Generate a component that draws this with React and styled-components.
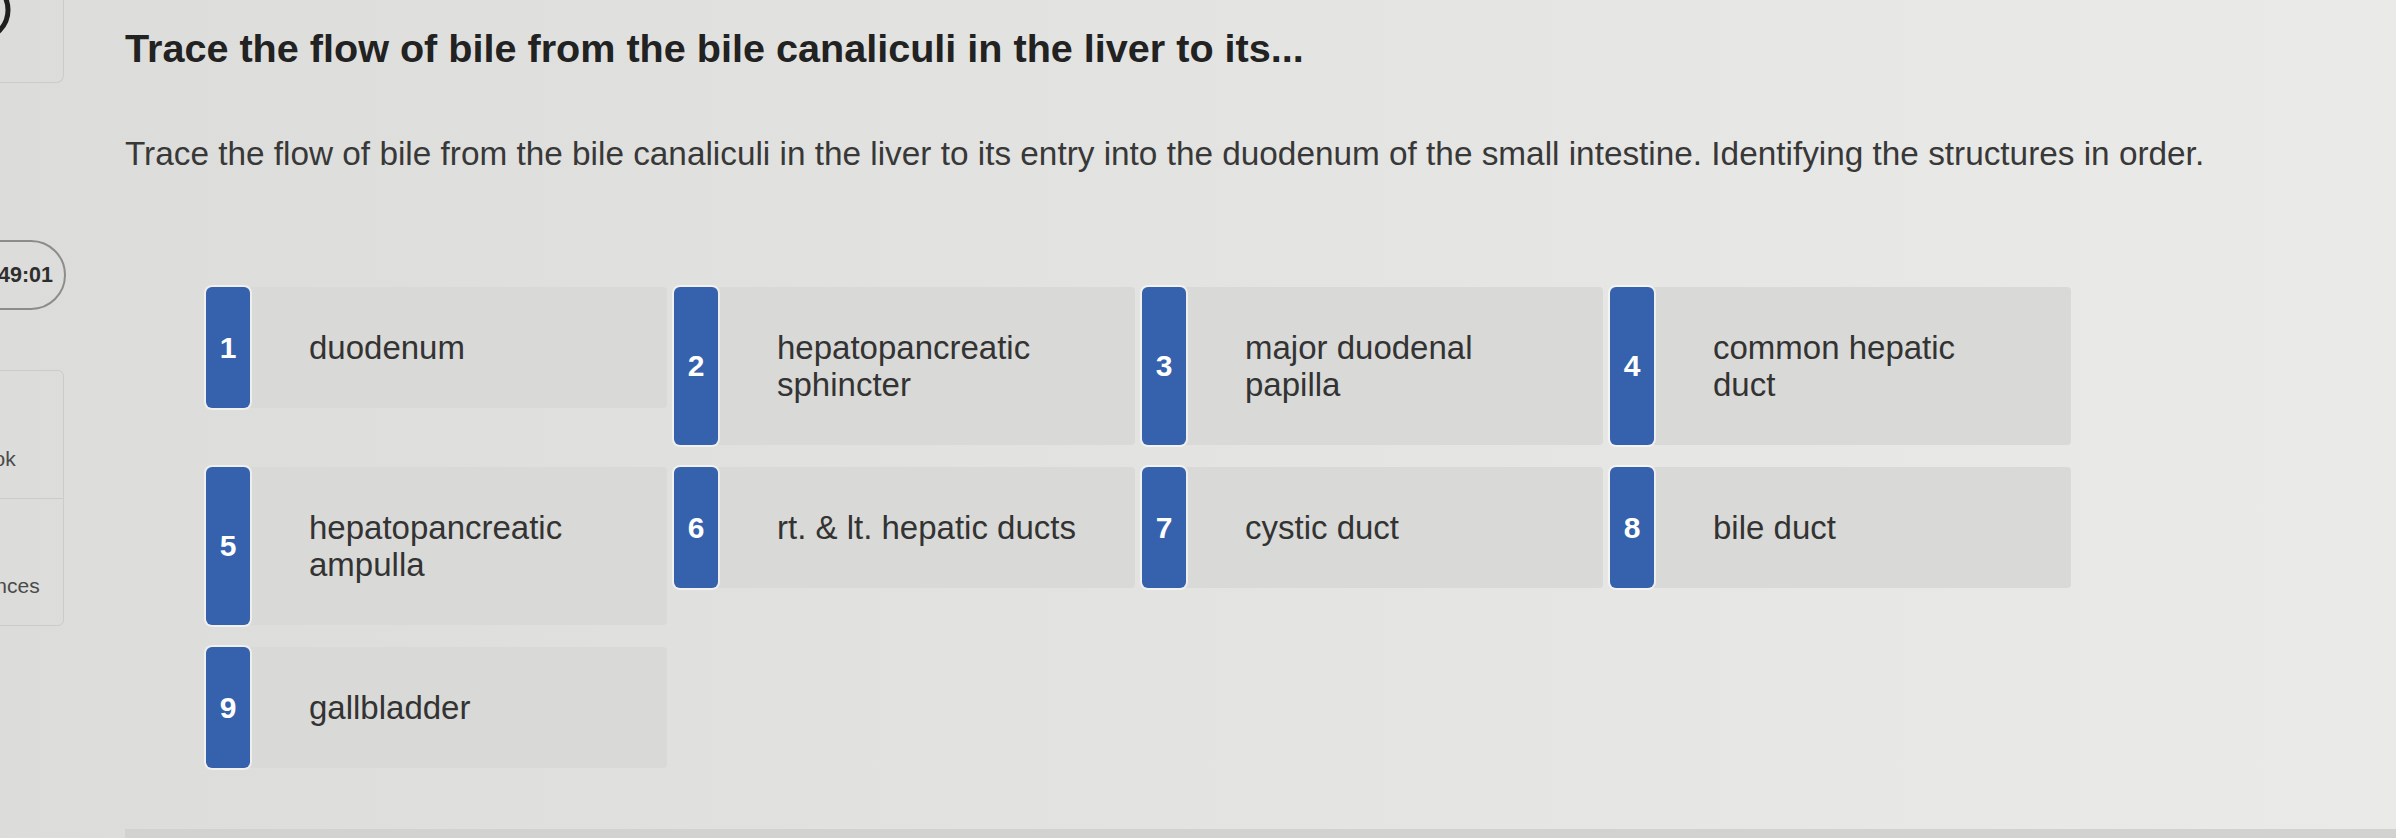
import React from "react";
import styled, { createGlobalStyle } from "styled-components";

const GlobalStyle = createGlobalStyle`
  html, body { margin: 0; padding: 0; }
  body {
    background: linear-gradient(90deg, #dcdcda 0%, #e1e1df 35%, #e6e6e4 70%, #eaeae8 100%);
    font-family: "Liberation Sans", Arial, sans-serif;
    color: #333;
    overflow: hidden;
  }
`;

const Page = styled.div`
  display: flex;
  width: 2396px;
  height: 838px;
`;

const Sidebar = styled.aside`
  width: 66px;
  flex: none;
  display: flex;
  flex-direction: column;
`;

const TopBox = styled.div`
  height: 83px;
  width: 156px;
  margin-left: -92px;
  box-sizing: border-box;
  border: 1px solid #cbcbc9;
  border-top: none;
  border-radius: 0 0 8px 8px;
  display: flex;
  justify-content: center;
  align-items: flex-start;
  overflow: hidden;
`;

const Ring = styled.svg`
  width: 70px;
  height: 50px;
  flex: none;
`;

const Timer = styled.div`
  margin-top: 157px;
  height: 70px;
  width: 160px;
  margin-left: -94px;
  box-sizing: border-box;
  border: 2px solid #8c8c8a;
  border-radius: 35px;
  display: flex;
  align-items: center;
  justify-content: flex-end;
  padding-right: 11px;
  font-weight: 700;
  font-size: 21.5px;
  color: #2e2e2e;
`;

const NavBox = styled.div`
  margin-top: 60px;
  width: 156px;
  margin-left: -92px;
  box-sizing: border-box;
  border: 1px solid #cbcbc9;
  border-radius: 6px;
  display: flex;
  flex-direction: column;
`;

const NavItem = styled.div`
  height: 127px;
  box-sizing: border-box;
  display: flex;
  flex-direction: column;
  align-items: center;
  justify-content: flex-end;
  padding-bottom: 27px;
  font-size: 21px;
  line-height: 24px;
  color: #4a4a4a;
  border-top: ${(p) => (p.$divided ? "1px solid #cbcbc9" : "none")};
`;

const Main = styled.main`
  flex: 1;
  padding-left: 59px;
  padding-top: 25px;
  display: flex;
  flex-direction: column;
`;

const Title = styled.h1`
  margin: 0;
  font-size: 39.6px;
  line-height: 46px;
  font-weight: 700;
  color: #222;
`;

const Prompt = styled.p`
  margin: 63px 0 0;
  font-size: 33.35px;
  line-height: 40px;
  color: #383838;
`;

const Grid = styled.div`
  margin: 113px 0 0 81px;
  display: grid;
  grid-template-columns: repeat(4, 461px);
  column-gap: 7px;
  row-gap: 22px;
  align-items: start;
`;

const Card = styled.div`
  display: flex;
  background: #d9d9d7;
  border-radius: 4px;
`;

const Tab = styled.div`
  width: 44px;
  flex: none;
  background: #3561ad;
  border-radius: 6px;
  box-shadow: 0 0 0 2px rgba(255, 255, 255, 0.55);
  display: flex;
  align-items: center;
  justify-content: center;
  color: #fff;
  font-weight: 700;
  font-size: 30px;
`;

const Label = styled.div`
  padding: 42px 0 42px 59px;
  width: 306px;
  font-size: 33px;
  line-height: 37px;
  color: #333;
`;

const BottomBar = styled.div`
  margin-top: 61px;
  height: 12px;
  background: #d2d2d0;
`;

const items = [
  "duodenum",
  "hepatopancreatic sphincter",
  "major duodenal papilla",
  "common hepatic duct",
  "hepatopancreatic ampulla",
  "rt. & lt. hepatic ducts",
  "cystic duct",
  "bile duct",
  "gallbladder",
];

export default function App() {
  return (
    <>
      <GlobalStyle />
      <Page>
        <Sidebar>
          <TopBox>
            <Ring viewBox="0 0 70 50">
              <circle cx="28" cy="10" r="29" fill="none" stroke="#1f1f1f" strokeWidth="5" />
            </Ring>
          </TopBox>
          <Timer>49:01</Timer>
          <NavBox>
            <NavItem>eBook</NavItem>
            <NavItem $divided>References</NavItem>
          </NavBox>
        </Sidebar>
        <Main>
          <Title>Trace the flow of bile from the bile canaliculi in the liver to its...</Title>
          <Prompt>
            Trace the flow of bile from the bile canaliculi in the liver to its entry into the duodenum of the small intestine. Identifying the structures in order.
          </Prompt>
          <Grid>
            {items.map((text, i) => (
              <Card key={text}>
                <Tab>{i + 1}</Tab>
                <Label>{text}</Label>
              </Card>
            ))}
          </Grid>
          <BottomBar />
        </Main>
      </Page>
    </>
  );
}
